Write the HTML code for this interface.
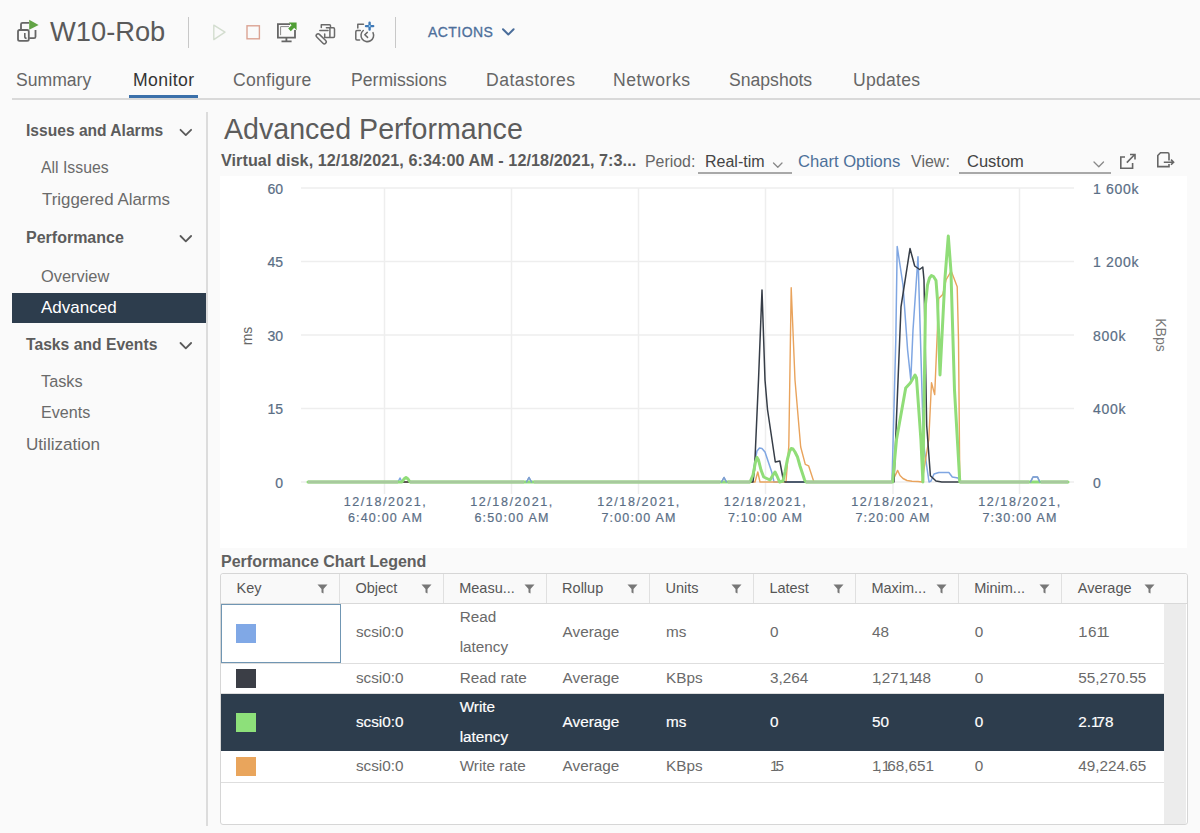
<!DOCTYPE html>
<html><head><meta charset="utf-8">
<style>
html,body{margin:0;padding:0;}
body{width:1200px;height:833px;overflow:hidden;background:#fafafa;font-family:"Liberation Sans",sans-serif;position:relative;color:#565656;}
.a{position:absolute;white-space:nowrap;}
.t{line-height:1;}
</style></head>
<body>
<!-- header -->
<div class="a t" id="title" style="left:50px;top:18px;font-size:27.3px;color:#5a5a5a;">W10-Rob</div>
<div class="a" style="left:188px;top:17px;width:1px;height:31px;background:#c8c8c8;"></div>
<div class="a" style="left:395px;top:17px;width:1px;height:31px;background:#c8c8c8;"></div>
<div class="a t" style="left:428px;top:25px;font-size:14px;letter-spacing:0.45px;color:#4d6f9b;-webkit-text-stroke:0.3px #4d6f9b;">ACTIONS</div>


<svg class="a" style="left:0;top:0;" width="400" height="60" viewBox="0 0 400 60">
<!-- vm icon -->
<g fill="none" stroke="#666" stroke-width="1.8" stroke-linejoin="round">
<path d="M29 22.8H22.5Q21 22.8 21 24.3V29.5"/>
<path d="M35.5 30V36.8Q35.5 38.2 34 38.2H29.2"/>
<rect x="18" y="30" width="10.8" height="10.8" rx="1.6"/>
</g>
<path d="M29.2 19.8L38.6 25.1L29.2 29.8Z" fill="#62a446"/>
<path d="M24.8 33V36.6Q24.8 38.4 26.6 38.4" fill="none" stroke="#666" stroke-width="1.6"/>
<!-- play -->
<path d="M213.8 25.2L225 32.2L213.8 39.6Z" fill="none" stroke="#d3ddcf" stroke-width="1.4" stroke-linejoin="round"/>
<!-- stop -->
<rect x="247" y="25.8" width="12.4" height="13" fill="none" stroke="#dba393" stroke-width="1.4"/>
<!-- monitor -->
<g fill="none" stroke="#666" stroke-width="1.8">
<path d="M290 24.2H277.9V37.6H295V30"/>
<path d="M286.4 37.8V40.8M281.5 41.4H291.6"/>
<path d="M280.6 35.2V26.6H289" stroke-width="1" stroke="#888"/>
</g>
<path d="M288.8 22.5H296.6V30.2L294.2 27.8L290.8 31.2L288.2 28.6L291.6 25.2Z" fill="#4f9e35"/>
<!-- migrate icon -->
<g fill="none" stroke="#6a6a6a" stroke-width="1.5" stroke-linejoin="round" stroke-linecap="round">
<path d="M321.3 27.6V24.7H329.5Q330.5 24.7 330.5 25.7V26.4"/>
<path d="M326.4 27.8H333.4Q334.5 27.8 334.5 28.9V36.3Q334.5 37.4 333.4 37.4H324.7V33.9"/>
<path d="M329.9 28.6V36.8"/>
<path d="M319.8 30.6H328"/>
<rect x="-6.3" y="-1.9" width="12.6" height="3.8" rx="1.9" transform="translate(321.2 38.8) rotate(45)"/>
</g>
<!-- snapshot icon -->
<g fill="none" stroke="#6a6a6a" stroke-width="1.5" stroke-linejoin="round" stroke-linecap="round">
<path d="M363.5 24.3H357.8V28"/>
<path d="M360.3 30.6H357Q355.8 30.6 355.8 31.8V38.8Q355.8 40 357 40H359.6"/>
<path d="M363.25 30.5A6.3 6.3 0 1 0 373 32.6"/>
<path d="M367.3 32.4L364.8 34.7L367.6 37.4"/>
</g>
<path d="M369.6 22.6V29.6M366 26.1H373.2" stroke="#3f78b5" stroke-width="2.4" stroke-linecap="round"/>
<circle cx="369.6" cy="26.1" r="1" fill="#8fd4ff"/>
</svg>
<svg class="a" style="left:0;top:0;" width="1200" height="360" viewBox="0 0 1200 360">
<g fill="none" stroke-linecap="round" stroke-linejoin="round">
<path d="M503 29.2L508.3 34.5L513.6 29.2" stroke="#4a6d9a" stroke-width="2"/>
<path d="M180.5 129.8L185.8 135.1L191.1 129.8" stroke="#5a5a5a" stroke-width="1.8"/>
<path d="M180.5 236L185.8 241.3L191.1 236" stroke="#5a5a5a" stroke-width="1.8"/>
<path d="M180.5 343L185.8 348.3L191.1 343" stroke="#5a5a5a" stroke-width="1.8"/>
<path d="M773.5 163L777.8 167.2L782 163" stroke="#888" stroke-width="1.3"/>
<path d="M1094 162L1098.8 166.8L1103.5 162" stroke="#888" stroke-width="1.3"/>
</g>
<g fill="none" stroke="#666" stroke-width="1.6">
<path d="M1125 157H1120.8V168.2H1132.6V163"/>
<path d="M1126.8 162.6L1134.5 154.8M1130 154.5H1135V159.5"/>
<path d="M1169 160.5V154.2Q1169 152.8 1167.6 152.8H1160.5L1157.8 155.5V166.6H1169V164"/>
<path d="M1163.8 162.2H1173.5M1171 159.6L1173.6 162.2L1171 164.8"/>
</g>
</svg>

<!-- tabs -->
<div class="a t" style="left:16px;top:71.5px;font-size:17.6px;color:#666;">Summary</div>
<div class="a t" style="left:133px;top:71.5px;font-size:17.6px;color:#333;letter-spacing:0.4px;">Monitor</div>
<div class="a t" style="left:233px;top:71.5px;font-size:17.6px;color:#666;letter-spacing:0.25px;">Configure</div>
<div class="a t" style="left:351px;top:71.5px;font-size:17.6px;color:#666;">Permissions</div>
<div class="a t" style="left:486px;top:71.5px;font-size:17.6px;color:#666;letter-spacing:0.45px;">Datastores</div>
<div class="a t" style="left:613px;top:71.5px;font-size:17.6px;color:#666;letter-spacing:0.55px;">Networks</div>
<div class="a t" style="left:729px;top:71.5px;font-size:17.6px;color:#666;">Snapshots</div>
<div class="a t" style="left:853px;top:71.5px;font-size:17.6px;color:#666;letter-spacing:0.25px;">Updates</div>
<div class="a" style="left:12px;top:98px;width:1188px;height:2px;background:#d9d9d9;"></div>
<div class="a" style="left:128.5px;top:94.5px;width:69.5px;height:3.8px;background:#3b70aa;"></div>

<!-- sidebar -->
<div class="a" style="left:206px;top:112px;width:2px;height:714px;background:#dcdcdc;"></div>
<div class="a t" style="left:26px;top:122.5px;font-size:15.6px;font-weight:bold;color:#5c5c5c;">Issues and Alarms</div>
<div class="a t" style="left:41px;top:160.3px;font-size:15.8px;color:#6a6a6a;">All Issues</div>
<div class="a t" style="left:42px;top:191.5px;font-size:16.9px;color:#6a6a6a;">Triggered Alarms</div>
<div class="a t" style="left:26px;top:229.8px;font-size:16px;font-weight:bold;color:#5c5c5c;">Performance</div>
<div class="a t" style="left:41px;top:268px;font-size:16.4px;color:#6a6a6a;">Overview</div>
<div class="a" style="left:12px;top:293px;width:194px;height:30px;background:#2d3d4d;"></div>
<div class="a t" style="left:41px;top:299px;font-size:17px;color:#fff;">Advanced</div>
<div class="a t" style="left:26px;top:337px;font-size:15.7px;font-weight:bold;color:#5c5c5c;">Tasks and Events</div>
<div class="a t" style="left:41px;top:372.5px;font-size:16.3px;color:#6a6a6a;">Tasks</div>
<div class="a t" style="left:41px;top:403.5px;font-size:16.1px;color:#6a6a6a;">Events</div>
<div class="a t" style="left:26px;top:435.5px;font-size:17.1px;color:#6a6a6a;">Utilization</div>

<!-- main heading -->
<div class="a t" style="left:224px;top:115px;font-size:28.6px;color:#5c5c5c;">Advanced Performance</div>
<div class="a t" style="left:221px;top:152px;font-size:16.2px;font-weight:bold;color:#5a5a5a;letter-spacing:0.055px;">Virtual disk, 12/18/2021, 6:34:00 AM - 12/18/2021, 7:3...</div>
<div class="a t" style="left:645px;top:153.8px;font-size:15.9px;color:#666;">Period:</div>
<div class="a t" style="left:705px;top:153.8px;font-size:16px;color:#444;">Real-tim</div>
<div class="a" style="left:698px;top:172px;width:94px;height:1.6px;background:#a8a8a8;"></div>
<div class="a t" style="left:798px;top:153.8px;font-size:16.6px;color:#4d7099;">Chart Options</div>
<div class="a t" style="left:911px;top:153.8px;font-size:16px;color:#666;">View:</div>
<div class="a t" style="left:967px;top:152.8px;font-size:16.5px;color:#444;">Custom</div>
<div class="a" style="left:959px;top:172px;width:152px;height:1.6px;background:#a8a8a8;"></div>

<!-- chart -->
<div class="a" style="left:220px;top:176px;width:967px;height:372px;background:#fff;"></div>

<svg class="a" style="left:0;top:0;" width="1200" height="560" viewBox="0 0 1200 560">
<g stroke="#eeeeee" stroke-width="1.5" fill="none">
<path d="M301 188H1074M301 261.5H1074M301 335H1074M301 408.5H1074M301 482H1074"/>
<path d="M384.5 188V494M511.5 188V494M638.5 188V494M765.5 188V494M893 188V494M1019.5 188V494"/>
</g>
<g font-family="Liberation Sans" font-size="14" fill="#5a6e85" stroke="#5a6e85" stroke-width="0.2">
<g text-anchor="end">
<text x="283" y="193.6">60</text><text x="283" y="266.6">45</text><text x="283" y="340.6">30</text><text x="283" y="413.6">15</text><text x="283" y="487.6">0</text>
</g>
<g letter-spacing="0.7"><text x="1093" y="193.6">1 600k</text><text x="1093" y="266.6">1 200k</text><text x="1093" y="340.6">800k</text><text x="1093" y="413.6">400k</text><text x="1093" y="487.6">0</text></g>
<text transform="translate(252 336) rotate(-90)" text-anchor="middle" fill="#666" stroke="none" font-size="14">ms</text>
<text transform="translate(1156 335) rotate(90)" text-anchor="middle" fill="#777" stroke="none" font-size="14">KBps</text>
<g text-anchor="middle" letter-spacing="1.2" font-size="12.5">
<text x="385.5" y="506" letter-spacing="1.6">12/18/2021,</text><text x="385.5" y="522">6:40:00 AM</text>
<text x="512" y="506" letter-spacing="1.6">12/18/2021,</text><text x="512" y="522">6:50:00 AM</text>
<text x="639" y="506" letter-spacing="1.6">12/18/2021,</text><text x="639" y="522">7:00:00 AM</text>
<text x="765.5" y="506" letter-spacing="1.6">12/18/2021,</text><text x="765.5" y="522">7:10:00 AM</text>
<text x="893" y="506" letter-spacing="1.6">12/18/2021,</text><text x="893" y="522">7:20:00 AM</text>
<text x="1020" y="506" letter-spacing="1.6">12/18/2021,</text><text x="1020" y="522">7:30:00 AM</text>
</g>
</g>
<g fill="none" stroke-linejoin="round" stroke-linecap="round">
<path stroke="#7fa6e2" stroke-width="1.5" d="M308.0 482.0L398.0 482.0L400.0 478.0L402.0 482.0L526.5 482.0L529.0 477.5L531.5 482.0L721.5 482.0L724.0 477.5L726.5 482.0L752.0 482.0L754.5 463.0L757.0 451.0L759.5 448.0L762.0 448.5L765.0 452.0L771.7 472.0L774.0 482.0L892.0 482.0L895.8 340.0L897.2 246.5L903.0 285.0L907.6 350.0L910.8 380.0L913.0 330.0L918.0 256.7L920.5 340.0L923.5 443.7L929.0 482.0L931.0 481.0L934.0 474.0L938.8 472.5L948.9 472.5L952.3 477.0L958.0 478.0L960.0 482.0L1030.5 482.0L1033.0 477.0L1037.5 477.0L1039.8 482.0L1068.0 482.0"/>
<path stroke="#e9a35c" stroke-width="1.4" d="M308.0 482.0L755.0 482.0L757.8 472.0L760.0 482.0L786.0 482.0L788.8 446.0L791.2 287.7L795.0 380.0L800.7 447.0L805.3 464.4L808.6 465.8L813.9 482.0L892.0 482.0L895.0 476.0L897.6 470.4L900.0 475.5L903.0 478.5L907.0 480.5L912.0 481.2L918.0 481.5L922.0 482.0L928.8 439.5L931.5 382.8L934.7 394.6L938.7 298.6L942.7 294.6L946.0 280.0L951.2 271.0L957.2 286.7L958.5 339.5L959.8 482.0L1068.0 482.0"/>
<path stroke="#363d47" stroke-width="1.5" d="M308.0 482.0L753.0 482.0L754.5 470.0L758.5 380.0L762.0 290.0L765.0 380.0L767.5 409.5L775.3 462.0L779.8 461.0L783.5 481.0L785.0 482.0L894.0 482.0L896.2 425.5L901.0 306.9L910.0 248.5L914.7 266.0L919.6 269.5L922.8 267.0L924.0 280.0L926.7 425.5L930.4 475.7L936.0 481.0L941.8 482.0L1068.0 482.0"/>
<path stroke="#90dd78" stroke-width="3" d="M308.0 482.0L402.0 482.0L404.0 479.0L406.0 477.5L408.0 479.0L410.0 482.0L750.0 482.0L753.0 475.0L755.5 462.0L757.0 457.4L758.5 460.0L761.0 470.0L763.7 477.0L770.0 480.0L773.0 475.0L775.0 472.0L777.0 476.0L779.6 482.0L783.0 481.0L785.0 472.0L787.5 459.0L789.5 451.5L791.2 448.5L793.0 449.0L795.0 452.0L797.5 457.0L800.0 466.0L804.6 480.0L806.0 482.0L892.6 482.0L896.5 439.5L905.7 388.0L910.3 383.0L915.0 375.0L916.5 378.0L920.9 439.5L922.9 482.0L925.5 304.0L927.5 285.0L929.5 278.0L931.5 275.5L933.5 276.5L936.0 280.5L937.5 300.0L940.0 375.0L944.9 279.0L948.3 236.0L950.9 270.4L954.5 390.0L959.8 482.0L1068.0 482.0"/>
<path stroke="#a7c99d" stroke-width="3" stroke-linecap="butt" d="M308 482H398M410 482H524M534 482H720M728 482H750M806 482H892M960 482H1029M1041 482H1068"/>
<path stroke="#7f9fcf" stroke-width="1.5" d="M526.5 482L529 477.5L531.5 482M721.5 482L724 477.5L726.5 482M1030.5 482L1033 477L1037.5 477L1039.8 482"/>
</g>
</svg>

<!-- legend -->
<div class="a t" style="left:221px;top:554.2px;font-size:16px;font-weight:bold;color:#606060;">Performance Chart Legend</div>
<div class="a" style="left:220px;top:572.5px;width:967.5px;height:252.5px;background:#fff;border:1px solid #d6d6d6;border-radius:3px;box-sizing:border-box;"></div>
<div class="a" style="left:221px;top:573.5px;width:965.5px;height:29.5px;background:#f9f9f9;border-bottom:1px solid #d9d9d9;border-radius:3px 3px 0 0;"></div>
<div class="a t" style="left:236.5px;top:581px;font-size:14.5px;color:#565656;">Key</div>
<svg class="a" style="left:316.9px;top:584px;" width="11" height="10" viewBox="0 0 11 10"><path d="M0.5 0.5H10.5L6.5 5V9.5L4.5 8.5V5Z" fill="#777"/></svg>
<div class="a" style="left:338.9px;top:573.5px;width:1px;height:29.5px;background:#e0e0e0;"></div>
<div class="a t" style="left:355.4px;top:581px;font-size:14.5px;color:#565656;">Object</div>
<svg class="a" style="left:420.7px;top:584px;" width="11" height="10" viewBox="0 0 11 10"><path d="M0.5 0.5H10.5L6.5 5V9.5L4.5 8.5V5Z" fill="#777"/></svg>
<div class="a" style="left:442.7px;top:573.5px;width:1px;height:29.5px;background:#e0e0e0;"></div>
<div class="a t" style="left:459.2px;top:581px;font-size:14.5px;color:#565656;">Measu...</div>
<svg class="a" style="left:523.6px;top:584px;" width="11" height="10" viewBox="0 0 11 10"><path d="M0.5 0.5H10.5L6.5 5V9.5L4.5 8.5V5Z" fill="#777"/></svg>
<div class="a" style="left:545.6px;top:573.5px;width:1px;height:29.5px;background:#e0e0e0;"></div>
<div class="a t" style="left:562.1px;top:581px;font-size:14.5px;color:#565656;">Rollup</div>
<svg class="a" style="left:627.0px;top:584px;" width="11" height="10" viewBox="0 0 11 10"><path d="M0.5 0.5H10.5L6.5 5V9.5L4.5 8.5V5Z" fill="#777"/></svg>
<div class="a" style="left:649.0px;top:573.5px;width:1px;height:29.5px;background:#e0e0e0;"></div>
<div class="a t" style="left:665.5px;top:581px;font-size:14.5px;color:#565656;">Units</div>
<svg class="a" style="left:730.9px;top:584px;" width="11" height="10" viewBox="0 0 11 10"><path d="M0.5 0.5H10.5L6.5 5V9.5L4.5 8.5V5Z" fill="#777"/></svg>
<div class="a" style="left:752.9px;top:573.5px;width:1px;height:29.5px;background:#e0e0e0;"></div>
<div class="a t" style="left:769.4px;top:581px;font-size:14.5px;color:#565656;">Latest</div>
<svg class="a" style="left:832.9px;top:584px;" width="11" height="10" viewBox="0 0 11 10"><path d="M0.5 0.5H10.5L6.5 5V9.5L4.5 8.5V5Z" fill="#777"/></svg>
<div class="a" style="left:854.9px;top:573.5px;width:1px;height:29.5px;background:#e0e0e0;"></div>
<div class="a t" style="left:871.4px;top:581px;font-size:14.5px;color:#565656;">Maxim...</div>
<svg class="a" style="left:935.7px;top:584px;" width="11" height="10" viewBox="0 0 11 10"><path d="M0.5 0.5H10.5L6.5 5V9.5L4.5 8.5V5Z" fill="#777"/></svg>
<div class="a" style="left:957.7px;top:573.5px;width:1px;height:29.5px;background:#e0e0e0;"></div>
<div class="a t" style="left:974.2px;top:581px;font-size:14.5px;color:#565656;">Minim...</div>
<svg class="a" style="left:1039.3px;top:584px;" width="11" height="10" viewBox="0 0 11 10"><path d="M0.5 0.5H10.5L6.5 5V9.5L4.5 8.5V5Z" fill="#777"/></svg>
<div class="a" style="left:1061.3px;top:573.5px;width:1px;height:29.5px;background:#e0e0e0;"></div>
<div class="a t" style="left:1077.8px;top:581px;font-size:14.5px;color:#565656;">Average</div>
<svg class="a" style="left:1143.5px;top:584px;" width="11" height="10" viewBox="0 0 11 10"><path d="M0.5 0.5H10.5L6.5 5V9.5L4.5 8.5V5Z" fill="#777"/></svg>
<div class="a" style="left:1164px;top:603.5px;width:22px;height:220.5px;background:#ececec;"></div>
<div class="a" style="left:221px;top:662.5px;width:943px;height:1px;background:#dedede;"></div>
<div class="a" style="left:236px;top:624.0px;width:20px;height:19px;background:#80a8e6;"></div>
<div class="a t" style="left:355.9px;top:624.0px;font-size:15.3px;color:#6a6a6a;">scsi0:0</div>
<div class="a t" style="left:459.7px;top:609.0px;font-size:15.3px;color:#6a6a6a;">Read</div>
<div class="a t" style="left:459.7px;top:639.0px;font-size:15.3px;color:#6a6a6a;">latency</div>
<div class="a t" style="left:562.6px;top:624.0px;font-size:15.3px;color:#6a6a6a;">Average</div>
<div class="a t" style="left:666.0px;top:624.0px;font-size:15.3px;color:#6a6a6a;">ms</div>
<div class="a t" style="left:769.9px;top:624.0px;font-size:15.3px;color:#6a6a6a;">0</div>
<div class="a t" style="left:871.9px;top:624.0px;font-size:15.3px;color:#6a6a6a;">48</div>
<div class="a t" style="left:974.7px;top:624.0px;font-size:15.3px;color:#6a6a6a;">0</div>
<div class="a t" style="left:1078.3px;top:624.0px;font-size:15.3px;color:#6a6a6a;"><span style="letter-spacing:-3px">1</span>.6<span style="letter-spacing:-3px">1</span><span style="letter-spacing:-3px">1</span></div>
<div class="a" style="left:221px;top:692.5px;width:943px;height:1px;background:#dedede;"></div>
<div class="a" style="left:236px;top:669.0px;width:20px;height:19px;background:#3b3e46;"></div>
<div class="a t" style="left:355.9px;top:670.0px;font-size:15.3px;color:#6a6a6a;">scsi0:0</div>
<div class="a t" style="left:459.7px;top:670.0px;font-size:15.3px;color:#6a6a6a;">Read rate</div>
<div class="a t" style="left:562.6px;top:670.0px;font-size:15.3px;color:#6a6a6a;">Average</div>
<div class="a t" style="left:666.0px;top:670.0px;font-size:15.3px;color:#6a6a6a;">KBps</div>
<div class="a t" style="left:769.9px;top:670.0px;font-size:15.3px;color:#6a6a6a;">3,264</div>
<div class="a t" style="left:871.9px;top:670.0px;font-size:15.3px;color:#6a6a6a;"><span style="letter-spacing:-3px">1</span>,27<span style="letter-spacing:-3px">1</span>,<span style="letter-spacing:-3px">1</span>48</div>
<div class="a t" style="left:974.7px;top:670.0px;font-size:15.3px;color:#6a6a6a;">0</div>
<div class="a t" style="left:1078.3px;top:670.0px;font-size:15.3px;color:#6a6a6a;">55,270.55</div>
<div class="a" style="left:221px;top:693.5px;width:943px;height:57.3px;background:#2d3d4d;"></div>
<div class="a" style="left:236px;top:712.6px;width:20px;height:19px;background:#8de07a;"></div>
<div class="a t" style="left:355.9px;top:713.6px;font-size:15.3px;color:#fff;-webkit-text-stroke:0.18px #fff;">scsi0:0</div>
<div class="a t" style="left:459.7px;top:698.6px;font-size:15.3px;color:#fff;-webkit-text-stroke:0.18px #fff;">Write</div>
<div class="a t" style="left:459.7px;top:728.6px;font-size:15.3px;color:#fff;-webkit-text-stroke:0.18px #fff;">latency</div>
<div class="a t" style="left:562.6px;top:713.6px;font-size:15.3px;color:#fff;-webkit-text-stroke:0.18px #fff;">Average</div>
<div class="a t" style="left:666.0px;top:713.6px;font-size:15.3px;color:#fff;-webkit-text-stroke:0.18px #fff;">ms</div>
<div class="a t" style="left:769.9px;top:713.6px;font-size:15.3px;color:#fff;-webkit-text-stroke:0.18px #fff;">0</div>
<div class="a t" style="left:871.9px;top:713.6px;font-size:15.3px;color:#fff;-webkit-text-stroke:0.18px #fff;">50</div>
<div class="a t" style="left:974.7px;top:713.6px;font-size:15.3px;color:#fff;-webkit-text-stroke:0.18px #fff;">0</div>
<div class="a t" style="left:1078.3px;top:713.6px;font-size:15.3px;color:#fff;-webkit-text-stroke:0.18px #fff;">2.<span style="letter-spacing:-3px">1</span>78</div>
<div class="a" style="left:221px;top:781.5px;width:943px;height:1px;background:#dedede;"></div>
<div class="a" style="left:236px;top:757.1px;width:20px;height:19px;background:#e9a55c;"></div>
<div class="a t" style="left:355.9px;top:758.1px;font-size:15.3px;color:#6a6a6a;">scsi0:0</div>
<div class="a t" style="left:459.7px;top:758.1px;font-size:15.3px;color:#6a6a6a;">Write rate</div>
<div class="a t" style="left:562.6px;top:758.1px;font-size:15.3px;color:#6a6a6a;">Average</div>
<div class="a t" style="left:666.0px;top:758.1px;font-size:15.3px;color:#6a6a6a;">KBps</div>
<div class="a t" style="left:769.9px;top:758.1px;font-size:15.3px;color:#6a6a6a;"><span style="letter-spacing:-3px">1</span>5</div>
<div class="a t" style="left:871.9px;top:758.1px;font-size:15.3px;color:#6a6a6a;"><span style="letter-spacing:-3px">1</span>,<span style="letter-spacing:-3px">1</span>68,65<span style="letter-spacing:-3px">1</span></div>
<div class="a t" style="left:974.7px;top:758.1px;font-size:15.3px;color:#6a6a6a;">0</div>
<div class="a t" style="left:1078.3px;top:758.1px;font-size:15.3px;color:#6a6a6a;">49,224.65</div>
<div class="a" style="left:221px;top:603.5px;width:120px;height:59.5px;border:1.5px solid #7096b3;box-sizing:border-box;"></div>
</body></html>
